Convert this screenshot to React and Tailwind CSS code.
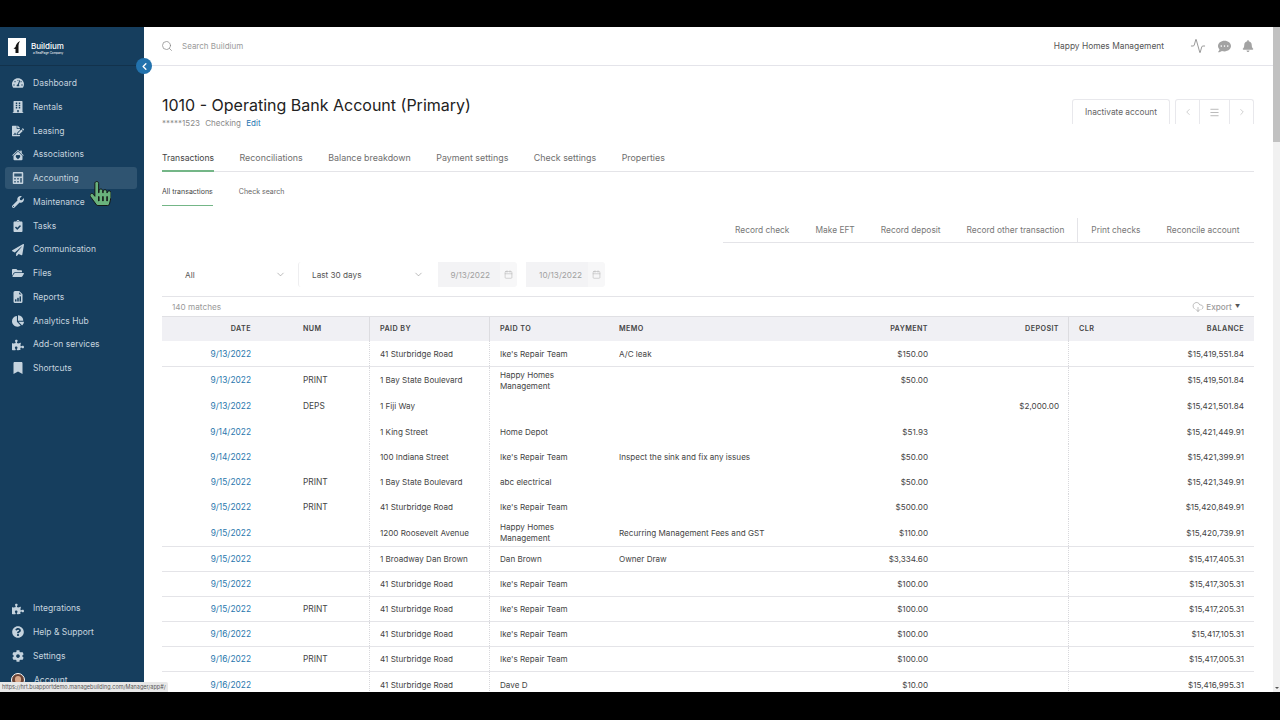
import React from 'react';
import {
  FaTachometerAlt, FaBuilding, FaFileSignature, FaCalculator, FaWrench, FaClipboardCheck, FaPaperPlane,
  FaFolderOpen, FaChartPie, FaPuzzlePiece, FaBookmark, FaQuestionCircle, FaCog, FaHandPointer, FaBell, FaCommentDots,
} from 'react-icons/fa';
import { BsHouseHeartFill, BsFileEarmarkBarGraphFill } from 'react-icons/bs';
import { ChevronLeft, ChevronRight, ChevronDown, Search, Menu, Calendar, CloudDownload, Activity } from 'lucide-react';

const topNav = [
  { label: 'Dashboard', icon: FaTachometerAlt },
  { label: 'Rentals', icon: FaBuilding },
  { label: 'Leasing', icon: FaFileSignature },
  { label: 'Associations', icon: BsHouseHeartFill },
  { label: 'Accounting', icon: FaCalculator, active: true },
  { label: 'Maintenance', icon: FaWrench },
  { label: 'Tasks', icon: FaClipboardCheck },
  { label: 'Communication', icon: FaPaperPlane },
  { label: 'Files', icon: FaFolderOpen },
  { label: 'Reports', icon: BsFileEarmarkBarGraphFill },
  { label: 'Analytics Hub', icon: FaChartPie },
  { label: 'Add-on services', icon: FaPuzzlePiece },
  { label: 'Shortcuts', icon: FaBookmark },
];

const bottomNav = [
  { label: 'Integrations', icon: FaPuzzlePiece },
  { label: 'Help & Support', icon: FaQuestionCircle },
  { label: 'Settings', icon: FaCog },
];

const tabs = ['Transactions', 'Reconciliations', 'Balance breakdown', 'Payment settings', 'Check settings', 'Properties'];

const sturbridge = '41 Sturbridge Road';
const ike = "Ike's Repair Team";

const rows = [
  { h: 'h-[26px]', line: true, date: '9/13/2022', by: sturbridge, to: ike, memo: 'A/C leak', pay: '$150.00', bal: '$15,419,551.84' },
  { h: 'h-[26px]', date: '9/13/2022', num: 'PRINT', by: '1 Bay State Boulevard', to: 'Happy Homes Management', pay: '$50.00', bal: '$15,419,501.84' },
  { h: 'h-[26px]', date: '9/13/2022', num: 'DEPS', by: '1 Fiji Way', dep: '$2,000.00', bal: '$15,421,501.84' },
  { h: 'h-[25px]', date: '9/14/2022', by: '1 King Street', to: 'Home Depot', pay: '$51.93', bal: '$15,421,449.91' },
  { h: 'h-[25px]', date: '9/14/2022', by: '100 Indiana Street', to: ike, memo: 'Inspect the sink and fix any issues', pay: '$50.00', bal: '$15,421,399.91' },
  { h: 'h-[25px]', date: '9/15/2022', num: 'PRINT', by: '1 Bay State Boulevard', to: 'abc electrical', pay: '$50.00', bal: '$15,421,349.91' },
  { h: 'h-[25px]', date: '9/15/2022', num: 'PRINT', by: sturbridge, to: ike, pay: '$500.00', bal: '$15,420,849.91' },
  { h: 'h-[28px]', line: true, date: '9/15/2022', by: '1200 Roosevelt Avenue', to: 'Happy Homes Management', memo: 'Recurring Management Fees and GST', pay: '$110.00', bal: '$15,420,739.91' },
  { h: 'h-[25px]', line: true, date: '9/15/2022', by: '1 Broadway  Dan Brown', to: 'Dan Brown', memo: 'Owner Draw', pay: '$3,334.60', bal: '$15,417,405.31' },
  { h: 'h-[25px]', line: true, date: '9/15/2022', by: sturbridge, to: ike, pay: '$100.00', bal: '$15,417,305.31' },
  { h: 'h-[25px]', line: true, date: '9/15/2022', num: 'PRINT', by: sturbridge, to: ike, pay: '$100.00', bal: '$15,417,205.31' },
  { h: 'h-[25px]', line: true, date: '9/16/2022', by: sturbridge, to: ike, pay: '$100.00', bal: '$15,417,105.31' },
  { h: 'h-[25px]', line: true, date: '9/16/2022', num: 'PRINT', by: sturbridge, to: ike, pay: '$100.00', bal: '$15,417,005.31' },
  { h: 'h-[25px]', date: '9/16/2022', by: sturbridge, to: 'Dave D', pay: '$10.00', bal: '$15,416,995.31' },
];

const cols = 'grid grid-cols-[131px_76px_120px_120px_200px_129px_130px_55px_131px]';

const NavItem = ({ item }) => {
  const Icon = item.icon;
  return (
    <div className={`ml-[5px] mr-[7px] h-[22px] my-[0.875px] flex items-center rounded-[3px] pl-[7px] ${item.active ? 'bg-[#2f5471]' : ''}`}>
      <Icon className="w-3 h-3 text-[#c5d3de] shrink-0" />
      <span className="ml-[9px] text-[8.5px] text-[#c5d3de]">{item.label}</span>
    </div>
  );
};

const Sidebar = () => (
  <div className="w-[144px] shrink-0 bg-[#163e5e] flex flex-col">
    <div className="h-[39px] border-b border-[#12324c] flex items-start pl-2 pt-[11px]">
      <div className="w-[18px] h-[18px] bg-white flex items-center justify-center">
        <svg viewBox="0 0 18 18" className="w-[18px] h-[18px]">
          <path d="M12 3 C9 4.5 8 6.5 7.5 9 L5.5 10.5 L7.5 11 L7.5 15 L10.5 15 L10.5 7.5 C10.5 6 11 4.5 12 3 Z" fill="#111" />
        </svg>
      </div>
      <div className="ml-[5px] mt-[4px] flex flex-col">
        <span className="text-[8px] leading-[9px] font-medium text-white">Buildium</span>
        <span className="text-[3px] leading-[4px] text-white ml-[2px]">a RealPage Company</span>
      </div>
    </div>
    <div className="pt-[5.5px] flex flex-col">
      {topNav.map((item) => <NavItem key={item.label} item={item} />)}
    </div>
    <div className="mt-auto flex flex-col">
      {bottomNav.map((item) => <NavItem key={item.label} item={item} />)}
      <div className="ml-[5px] h-[22px] mt-[1px] flex items-center pl-[6px] mb-[1px]">
        <div className="w-[14px] h-[14px] rounded-full border border-white bg-[#6b4436] overflow-hidden flex justify-center shrink-0">
          <div className="w-[6px] h-[7px] mt-[2px] rounded-full bg-[#d9a98c]" />
        </div>
        <span className="ml-[9px] text-[8.5px] text-[#c5d3de]">Account</span>
      </div>
    </div>
  </div>
);

const TopBar = () => (
  <div className="h-[39px] shrink-0 border-b border-[#e4e4ea] flex items-center pl-[17px] pr-[19px] bg-white">
    <Search className="w-3 h-3 text-[#8b8b8b]" strokeWidth={1.5} />
    <span className="ml-[9px] text-[8px] text-[#9a9a9a]">Search Buildium</span>
    <span className="ml-auto text-[8.4px] text-[#555]">Happy Homes Management</span>
    <Activity className="ml-[26px] w-[16px] h-[16px] text-[#9a9a9a]" strokeWidth={1.5} />
    <FaCommentDots className="ml-[12px] w-[13px] h-[13px] text-[#a3a3a3]" />
    <FaBell className="ml-[11px] w-3 h-3 text-[#a3a3a3]" />
  </div>
);

const TableRow = ({ row }) => (
  <div className={`${cols} ${row.h} ${row.line ? 'border-b border-[#e4e4e8]' : ''} text-[8.1px] leading-[11px] text-[#444]`}>
    <div className="flex items-center justify-end pt-px pr-[42px] text-[8.4px] text-[#2a77ad]">{row.date}</div>
    <div className="flex items-center pt-px pl-[10px] text-[8.4px]">{row.num}</div>
    <div className="flex items-center pt-px pl-[10px] border-l border-dotted border-[#d8d8dc]">{row.by}</div>
    <div className="flex items-center pt-px pl-[10px] pr-[30px] border-l border-dotted border-[#d8d8dc]">{row.to}</div>
    <div className="flex items-center pt-px pl-[10px] whitespace-nowrap">{row.memo}</div>
    <div className="flex items-center justify-end pt-px pr-[10px]">{row.pay}</div>
    <div className="flex items-center justify-end pt-px pr-[9px]">{row.dep}</div>
    <div className="border-l border-dotted border-[#d8d8dc]" />
    <div className="flex items-center justify-end pt-px pr-[10px]">{row.bal}</div>
  </div>
);

const TableHeader = () => (
  <div className={`${cols} h-[25px] bg-[#f0f0f4] border-t border-[#e0e0e4] text-[7.2px] font-semibold tracking-[0.4px] text-[#444]`}>
    <div className="flex items-center justify-end pr-[42px]">DATE</div>
    <div className="flex items-center pl-[10px]">NUM</div>
    <div className="flex items-center pl-[10px] border-l border-[#dcdce0]">PAID BY</div>
    <div className="flex items-center pl-[10px] border-l border-[#dcdce0]">PAID TO</div>
    <div className="flex items-center pl-[10px]">MEMO</div>
    <div className="flex items-center justify-end pr-[10px]">PAYMENT</div>
    <div className="flex items-center justify-end pr-[9px]">DEPOSIT</div>
    <div className="flex items-center pl-[10px] border-l border-[#dcdce0]">CLR</div>
    <div className="flex items-center justify-end pr-[10px]">BALANCE</div>
  </div>
);

const Select = ({ label, width, indent }) => (
  <div className={`${width} h-[25px] flex items-center justify-between ${indent} pr-[6px] rounded-[3px]`}>
    <span className="text-[8.2px] text-[#555] pt-px">{label}</span>
    <ChevronDown className="w-[11px] h-[11px] text-[#8a8a8a]" strokeWidth={1.25} />
  </div>
);

const DateBox = ({ value, pad }) => (
  <div className="w-[79px] h-[25px] flex rounded-[3px] bg-[#f7f7f8]">
    <div className={`w-[62px] bg-[#f3f3f5] flex items-center justify-end pt-px ${pad} text-[8.2px] text-[#a0a0a0]`}>{value}</div>
    <div className="flex-1 flex items-center justify-center">
      <Calendar className="w-[9px] h-[9px] text-[#b5b5b5]" strokeWidth={1.5} />
    </div>
  </div>
);

const Content = () => (
  <div className="flex-1 overflow-hidden pl-[18px] pr-[19px]">
    <div className="flex justify-between items-start pt-[28px]">
      <div>
        <h1 className="text-[16px] leading-[22px] text-[#222]">1010 - Operating Bank Account (Primary)</h1>
        <div className="mt-[1px] h-3 text-[8px] leading-3 text-[#8a8a8a]">
          *****1523 <span className="ml-[3px]">Checking</span> <span className="ml-[3px] text-[#1f74b0]">Edit</span>
        </div>
      </div>
      <div className="flex mt-[5px] text-[8.3px] text-[#666]">
        <div className="w-[98px] h-[25px] flex items-center justify-center border-t border-x border-[#e8e8ec] rounded-t-[3px]">Inactivate account</div>
        <div className="ml-[5px] h-[25px] flex border-t border-x border-[#e8e8ec] rounded-t-[3px] text-[#a5a5a5]">
          <div className="w-[24px] flex items-center justify-center border-r border-[#e8e8ec]"><ChevronLeft className="w-[10px] h-[10px]" strokeWidth={1.25} /></div>
          <div className="w-[30px] flex items-center justify-center border-r border-[#e8e8ec]"><Menu className="w-[11px] h-[11px] text-[#888]" strokeWidth={1.25} /></div>
          <div className="w-[23px] flex items-center justify-center"><ChevronRight className="w-[10px] h-[10px]" strokeWidth={1.25} /></div>
        </div>
      </div>
    </div>

    <div className="mt-[16px] h-[27px] flex gap-[25.5px] border-b border-[#e4e4e8] text-[8.9px] text-[#6e6e6e] whitespace-nowrap">
      {tabs.map((t, i) => (
        <div key={t} className={`h-[27px] ${i === 0 ? 'pt-[7px] w-[52px] text-[8.6px] border-b-2 border-[#74b687] text-[#444]' : 'pt-[6px]'}`}>{t}</div>
      ))}
    </div>

    <div className="h-[34px] flex gap-[26px] text-[7px] whitespace-nowrap">
      <div className="h-[34px] pt-[15px] border-b border-[#74b687] text-[#444]">All transactions</div>
      <div className="pt-[15px] text-[#666]">Check search</div>
    </div>

    <div className="mt-[12px] ml-auto w-[531px] h-[25px] flex items-center border-b border-[#e4e4e8] text-[8.4px] text-[#777] whitespace-nowrap">
      <span className="ml-[12px]">Record check</span>
      <span className="ml-[26px]">Make EFT</span>
      <span className="ml-[26px]">Record deposit</span>
      <span className="ml-[26px]">Record other transaction</span>
      <div className="ml-[13px] h-full border-l border-[#e4e4e8] flex items-center pl-[13px]">
        <span>Print checks</span>
        <span className="ml-[26px]">Reconcile account</span>
      </div>
    </div>

    <div className="mt-[19px] h-[25px] flex pl-[10px]">
      <Select label="All" width="w-[120px]" indent="pl-[13px]" />
      <div className="ml-[6px]"><Select label="Last 30 days" width="w-[132px]" indent="pl-[13px] border-l border-[#eeeef0]" /></div>
      <div className="ml-[8px]"><DateBox value="9/13/2022" pad="pr-[10px]" /></div>
      <div className="ml-[9px]"><DateBox value="10/13/2022" pad="pr-[6px]" /></div>
    </div>

    <div className="mt-[9px] h-[20px] pt-px border-t border-[#e4e4e8] flex items-center justify-between pl-[10px] pr-[14px] text-[8.2px] text-[#9a9a9a]">
      <span>140 matches</span>
      <span className="flex items-center font-medium">
        <CloudDownload className="w-3 h-3 mr-[2px]" strokeWidth={1.25} />
        Export
        <span className="ml-[3px] text-[5px] text-[#555]">▼</span>
      </span>
    </div>

    <TableHeader />
    {rows.map((row, i) => <TableRow key={i} row={row} />)}
  </div>
);

export default function App() {
  return (
    <div className="w-[1280px] h-[720px] bg-black pt-[27px] overflow-hidden relative font-['Inter',sans-serif]">
      <div className="h-[665px] flex bg-white overflow-hidden">
        <Sidebar />
        <div className="flex-1 flex min-w-0 relative">
          <div className="flex-1 flex flex-col min-w-0">
            <TopBar />
            <Content />
          </div>
          <div className="w-[7px] bg-[#f1f1f1] shrink-0 flex flex-col items-center">
            <div className="h-[115px] w-full bg-[#c1c1c1]" />
            <svg viewBox="0 0 4 2" className="w-1 h-[2px] mt-auto mb-[3px]"><path d="M0 0H4L2 2Z" fill="#555" /></svg>
          </div>
        </div>
      </div>

      {/* collapse button */}
      <div className="absolute left-[136px] top-[58px] w-4 h-4 rounded-full bg-[#2272ad] flex items-center justify-center">
        <ChevronLeft className="w-[11px] h-[11px] text-white" strokeWidth={3} />
      </div>

      {/* mouse cursor */}
      <FaHandPointer className="absolute left-[90px] top-[180px] w-[21px] h-[27px] text-[#69b27c]" stroke="#111" strokeWidth={20} />

      {/* browser status bubble */}
      <div className="absolute left-0 top-[682px] w-[168px] h-[10px] bg-[#e8e8e8] rounded-tr-[2px] flex items-center pl-[2px] text-[5.5px] text-[#555] overflow-hidden whitespace-nowrap">
        https://hrt.buapportdemo.managebuilding.com/Manager/app#/
      </div>
    </div>
  );
}
